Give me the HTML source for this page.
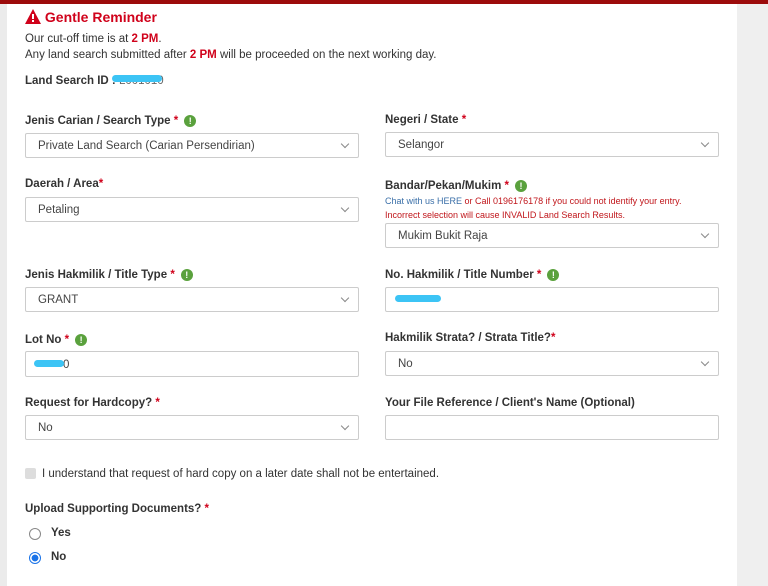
<!DOCTYPE html><html><head><style>
body{margin:0;width:768px;height:586px;background:#fff;font-family:"Liberation Sans",sans-serif;position:relative;overflow:hidden;color:#333}
.lg{position:absolute;left:0;top:0;width:7px;height:586px;background:#ebebeb}
.rg{position:absolute;right:0;top:0;width:31px;height:586px;background:#efefef}
.top{position:absolute;left:0;top:0;width:768px;height:4px;background:#9c0b0b}
.a{position:absolute;white-space:nowrap}
.l{font-size:11.5px;font-weight:bold;color:#333}
.r{color:#d0021b}
.s{position:absolute;border:1px solid #ccc;border-radius:2px;height:24px;box-sizing:border-box;font-size:11.5px;color:#444;padding:6px 12px;background:#fff}
.s.d:after{content:"";position:absolute;right:10px;top:7px;width:5px;height:5px;border-right:1px solid #888;border-bottom:1px solid #888;transform:rotate(45deg)}
.i{display:inline-block;width:12px;height:12px;border-radius:50%;background:#5aa13d;color:#fff;font-size:9px;text-align:center;line-height:12px;vertical-align:middle;margin-left:6px}
.blur{position:absolute;height:7px;background:#3cc4f5;border-radius:4px}
</style></head><body>
<div class="lg"></div><div class="rg"></div><div class="top"></div>
<div class="a" style="left:25px;top:9px;font-size:14px;font-weight:bold;color:#d0021b"><svg width="16" height="15" viewBox="0 0 16 15" style="vertical-align:-2px"><path d="M8 0L16 15H0z" fill="#d0021b"/><rect x="7" y="5" width="2" height="5" fill="#fff"/><rect x="7" y="11" width="2" height="2" fill="#fff"/></svg> Gentle Reminder</div>
<div class="a" style="left:25px;top:33px;font-size:11.5px">Our cut-off time is at <b class="r">2 PM</b>.</div>
<div class="a" style="left:25px;top:49px;font-size:11.5px">Any land search submitted after <b class="r">2 PM</b> will be proceeded on the next working day.</div>
<div class="a l" style="left:25px;top:75px">Land Search ID : <span style="color:#666;font-weight:normal">L001010</span></div>
<div class="blur" style="left:112px;top:75px;width:50px"></div>

<div class="a l" style="left:25px;top:115px">Jenis Carian / Search Type <span class="r">*</span><span class="i">!</span></div>
<div class="s d" style="left:25px;top:133px;width:334px;height:25px">Private Land Search (Carian Persendirian)</div>
<div class="a l" style="left:385px;top:114px">Negeri / State <span class="r">*</span></div>
<div class="s d" style="left:385px;top:132px;width:334px;height:25px">Selangor</div>

<div class="a l" style="left:25px;top:178px">Daerah / Area<span class="r">*</span></div>
<div class="s d" style="left:25px;top:197px;width:334px;height:25px">Petaling</div>
<div class="a l" style="left:385px;top:180px">Bandar/Pekan/Mukim <span class="r">*</span><span class="i">!</span></div>
<div class="a" style="left:385px;top:196px;font-size:9px;color:#c0161b"><span style="color:#3a6fa8">Chat with us HERE</span> or Call 0196176178 if you could not identify your entry.</div>
<div class="a" style="left:385px;top:210px;font-size:9px;color:#c0161b">Incorrect selection will cause INVALID Land Search Results.</div>
<div class="s d" style="left:385px;top:223px;width:334px;height:25px">Mukim Bukit Raja</div>

<div class="a l" style="left:25px;top:269px">Jenis Hakmilik / Title Type <span class="r">*</span><span class="i">!</span></div>
<div class="s d" style="left:25px;top:287px;width:334px;height:25px">GRANT</div>
<div class="a l" style="left:385px;top:269px">No. Hakmilik / Title Number <span class="r">*</span><span class="i">!</span></div>
<div class="s" style="left:385px;top:287px;width:334px;height:25px"></div>
<div class="blur" style="left:395px;top:295px;width:46px"></div>

<div class="a l" style="left:25px;top:334px">Lot No <span class="r">*</span><span class="i">!</span></div>
<div class="s" style="left:25px;top:351px;width:334px;height:26px;padding-left:37px;padding-top:7px">0</div>
<div class="blur" style="left:34px;top:360px;width:30px"></div>
<div class="a l" style="left:385px;top:332px">Hakmilik Strata? / Strata Title?<span class="r">*</span></div>
<div class="s d" style="left:385px;top:351px;width:334px;height:25px">No</div>

<div class="a l" style="left:25px;top:397px">Request for Hardcopy? <span class="r">*</span></div>
<div class="s d" style="left:25px;top:415px;width:334px;height:25px">No</div>
<div class="a l" style="left:385px;top:397px">Your File Reference / Client's Name (Optional)</div>
<div class="s" style="left:385px;top:415px;width:334px;height:25px"></div>

<div class="a" style="left:25px;top:468px;width:11px;height:11px;background:#ddd;border-radius:2px"></div>
<div class="a" style="left:42px;top:468px;font-size:11.5px">I understand that request of hard copy on a later date shall not be entertained.</div>
<div class="a l" style="left:25px;top:503px">Upload Supporting Documents? <span class="r">*</span></div>
<div class="a" style="left:29px;top:528px;width:10px;height:10px;border:1px solid #888;border-radius:50%"></div>
<div class="a l" style="left:51px;top:527px">Yes</div>
<div class="a" style="left:29px;top:552px;width:10px;height:10px;border:1px solid #1a73e8;border-radius:50%;background:radial-gradient(#1a73e8 45%,#fff 50%)"></div>
<div class="a l" style="left:51px;top:551px">No</div>
</body></html>
